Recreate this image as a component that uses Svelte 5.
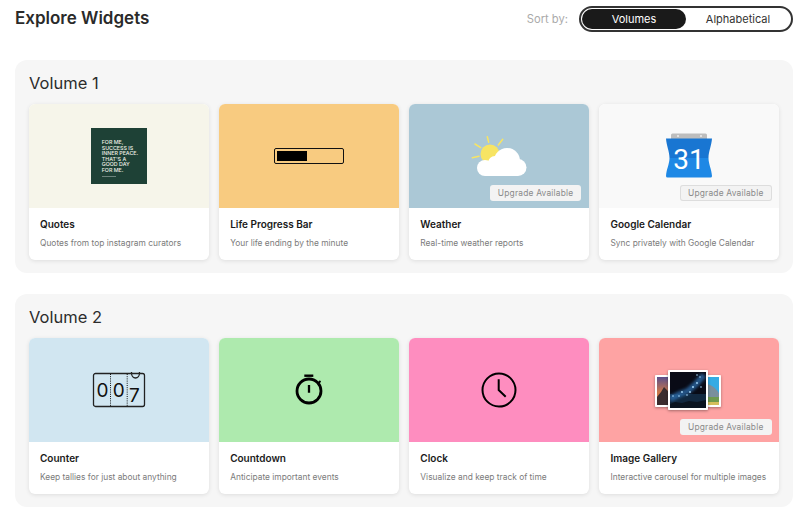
<script>
	const volumes = [
		{
			name: 'Volume 1',
			widgets: [
				{ title: 'Quotes', desc: 'Quotes from top instagram curators', bg: '#f6f5ea', icon: 'quote' },
				{ title: 'Life Progress Bar', desc: 'Your life ending by the minute', bg: '#f8cb80', icon: 'progress' },
				{ title: 'Weather', desc: 'Real-time weather reports', bg: '#abc8d6', icon: 'weather', upgrade: true },
				{ title: 'Google Calendar', desc: 'Sync privately with Google Calendar', bg: '#f9f9f9', icon: 'calendar', upgrade: true, outlined: true }
			]
		},
		{
			name: 'Volume 2',
			widgets: [
				{ title: 'Counter', desc: 'Keep tallies for just about anything', bg: '#d1e6f1', icon: 'counter' },
				{ title: 'Countdown', desc: 'Anticipate important events', bg: '#aeeaae', icon: 'countdown' },
				{ title: 'Clock', desc: 'Visualize and keep track of time', bg: '#fe8dbf', icon: 'clock' },
				{ title: 'Image Gallery', desc: 'Interactive carousel for multiple images', bg: '#fea3a3', icon: 'gallery', upgrade: true }
			]
		}
	];

	let sort = 'volumes';
</script>

<div class="page">
	<header class="top">
		<h1>Explore Widgets</h1>
		<div class="sort">
			<span class="sort-label">Sort by:</span>
			<div class="toggle">
				<button class:active={sort === 'volumes'} onclick={() => (sort = 'volumes')}>Volumes</button>
				<button class:active={sort === 'alpha'} onclick={() => (sort = 'alpha')}>Alphabetical</button>
			</div>
		</div>
	</header>

	{#each volumes as vol}
		<section class="volume">
			<h2>{vol.name}</h2>
			<div class="grid">
				{#each vol.widgets as w}
					<article class="card">
						<div class="thumb" style="background: {w.bg}">
							{#if w.icon === 'quote'}
								<div class="quote">
									<p>FOR ME,</p>
									<p>SUCCESS IS</p>
									<p>INNER PEACE.</p>
									<p>THAT'S A</p>
									<p>GOOD DAY</p>
									<p>FOR ME.</p>
									<div class="quote-by"></div>
								</div>
							{:else if w.icon === 'progress'}
								<div class="progress"><div class="progress-fill"></div></div>
							{:else if w.icon === 'weather'}
								<svg class="icon" width="56" height="42" viewBox="0 0 56 42">
									<g stroke="#f7e463" stroke-width="1.500" stroke-linecap="round">
										<line x1="16.300" y1="1.700" x2="17.700" y2="7.300" />
										<line x1="31.700" y1="4.300" x2="27.300" y2="10" />
										<line x1="4" y1="9" x2="9.700" y2="12.700" />
										<line x1="1.300" y1="22.700" x2="8" y2="21.300" />
									</g>
									<circle cx="19" cy="19" r="9.500" fill="#f7e463" />
									<g fill="#fff">
										<circle cx="14" cy="33" r="8" />
										<circle cx="24" cy="28" r="7" />
										<circle cx="36" cy="26" r="13" />
										<circle cx="47" cy="32.500" r="8.500" />
										<rect x="14" y="30" width="33" height="11" />
									</g>
								</svg>
							{:else if w.icon === 'calendar'}
								<svg class="icon calendar" width="48" height="46" viewBox="0 0 48 46">
									<path d="M6 2.500a1.500 1.500 0 0 1 1.500-1.500h33a1.500 1.500 0 0 1 1.500 1.500V8H6z" fill="#bdbdbd" />
									<circle cx="13" cy="3.500" r="1" fill="#eee" />
									<circle cx="36" cy="3.500" r="1" fill="#eee" />
									<path d="M1 6h46c-.4 7-3.500 13-3.500 19.500H4.500C4.500 19 1.400 13 1 6z" fill="#1976d2" />
									<path d="M4.500 25.500h39c0 6 3 11 3.500 18a1.500 1.500 0 0 1-1.500 1.500H2.500A1.500 1.500 0 0 1 1 43.500c.5-7 3.500-12 3.500-18z" fill="#1e88e5" />
									<text x="24" y="36" text-anchor="middle" class="cal-num">31</text>
								</svg>
							{:else if w.icon === 'counter'}
								<svg class="icon" width="54" height="36" viewBox="0 0 54 36">
									<rect x="1.500" y="1.500" width="51" height="33" rx="2" fill="none" stroke="#222" stroke-width="1.300" />
									<line x1="18.500" y1="2" x2="18.500" y2="34" stroke="#111" stroke-width="1" stroke-dasharray="1 1.200" />
									<line x1="35.200" y1="2" x2="35.200" y2="34" stroke="#111" stroke-width="1" stroke-dasharray="1 1.200" />
									<ellipse cx="43.500" cy="1" rx="4" ry="5" fill="none" stroke="#222" stroke-width="1.300" />
									<text x="10.500" y="25" text-anchor="middle" class="count-num">0</text>
									<text x="26.800" y="25" text-anchor="middle" class="count-num">0</text>
									<text x="42.500" y="30" text-anchor="middle" class="count-num">7</text>
								</svg>
							{:else if w.icon === 'countdown'}
								<svg class="icon" width="30" height="32" viewBox="0 0 30 32">
									<rect x="10.300" y="0.500" width="9" height="2.400" fill="#000" />
									<circle cx="15" cy="17" r="12" fill="none" stroke="#000" stroke-width="2.800" />
									<line x1="15" y1="11" x2="15" y2="18.700" stroke="#000" stroke-width="2.300" />
									<line x1="24" y1="9.500" x2="26.500" y2="7" stroke="#000" stroke-width="1.800" />
								</svg>
							{:else if w.icon === 'clock'}
								<svg class="icon" width="36" height="36" viewBox="0 0 36 36">
									<circle cx="18" cy="18" r="16.500" fill="none" stroke="#000" stroke-width="2" />
									<path d="M17.700 7.300V18l7 6.700" fill="none" stroke="#000" stroke-width="2" />
								</svg>
							{:else if w.icon === 'gallery'}
								<div class="gallery">
									<div class="photo left">
										<svg width="16" height="30" viewBox="0 0 16 30">
											<defs>
												<linearGradient id="dusk" x1="0" y1="0" x2="0" y2="1">
													<stop offset="0" stop-color="#5b4f8c" />
													<stop offset="0.5" stop-color="#c9764a" />
												</linearGradient>
											</defs>
											<rect width="16" height="30" fill="url(#dusk)" />
											<path d="M0 20l4-5 3-5 3 3 6 8v9H0z" fill="#3a2c2e" />
										</svg>
									</div>
									<div class="photo right">
										<svg width="16" height="30" viewBox="0 0 16 30">
											<rect width="16" height="30" fill="#35abe4" />
											<path d="M0 7c6 0 12 4 16 13v3H0z" fill="#7a8f9c" />
											<rect y="20" width="16" height="6" fill="#6f9a4e" />
											<rect y="25" width="16" height="5" fill="#d4bf5c" />
										</svg>
									</div>
									<div class="photo main">
										<svg width="36" height="36" viewBox="0 0 36 36">
											<defs>
												<filter id="glow"><feGaussianBlur stdDeviation="1.500" /></filter>
											</defs>
											<rect width="36" height="36" fill="#090b16" />
											<rect y="22" width="36" height="14" fill="#12283f" />
											<path d="M0 27l10-5 8-3 8-7 8-9" fill="none" stroke="#2f6fb0" stroke-width="6" filter="url(#glow)" opacity=".75" />
											<g fill="#a8d8fa">
												<circle cx="3" cy="24" r=".8" /><circle cx="9" cy="24" r=".8" /><circle cx="12" cy="20" r=".9" />
												<circle cx="17" cy="23" r=".8" /><circle cx="20" cy="20" r=".9" /><circle cx="23" cy="15" r="1" />
												<circle cx="27" cy="11" r=".9" /><circle cx="30" cy="5" r=".8" /><circle cx="27" cy="3" r=".8" /><circle cx="31" cy="15" r=".8" />
											</g>
											<path d="M0 32l5-2 7 1 7-2 8 1 9-2v8H0z" fill="#0a1420" />
										</svg>
									</div>
								</div>
							{/if}
							{#if w.upgrade}
								<span class="badge" class:outlined={w.outlined}>Upgrade Available</span>
							{/if}
						</div>
						<div class="body">
							<h3>{w.title}</h3>
							<p>{w.desc}</p>
						</div>
					</article>
				{/each}
			</div>
		</section>
	{/each}
</div>

<style>
	:global(body) {
		margin: 0;
		background: #fff;
		font-family: Inter, 'Liberation Sans', sans-serif;
	}

	.page {
		padding: 6px 7px 4px 15px;
		height: 501px;
		overflow: hidden;
	}

	.top {
		display: flex;
		align-items: center;
		justify-content: space-between;
		height: 26px;
		margin-bottom: 28px;
	}

	h1 {
		margin: 0;
		font-size: 17px;
		font-weight: 600;
		color: #2a2a2a;
		position: relative;
		top: -1px;
	}

	.sort {
		display: flex;
		align-items: center;
		gap: 11px;
	}

	.sort-label {
		font-size: 11.200px;
		color: #aaa;
	}

	.toggle {
		display: flex;
		box-sizing: border-box;
		width: 214px;
		height: 26px;
		padding: 1px;
		border: 2px solid #333;
		border-radius: 13px;
		background: #fff;
	}

	.toggle button {
		flex: 1;
		padding: 0;
		border: none;
		border-radius: 10px;
		background: none;
		color: #333;
		font: 400 11px Inter, sans-serif;
		cursor: pointer;
	}

	.toggle button.active {
		background: #1a1a1a;
		color: #fff;
	}

	.volume {
		box-sizing: border-box;
		height: 213px;
		margin-bottom: 21px;
		padding: 13px 14px 0;
		background: #f6f6f6;
		border-radius: 12px;
	}

	h2 {
		margin: 0 0 10px;
		font-size: 16.500px;
		line-height: 21px;
		font-weight: 400;
		color: #2c2c2c;
	}

	.grid {
		display: grid;
		grid-template-columns: repeat(4, 1fr);
		gap: 10.670px;
	}

	.card {
		height: 156px;
		background: #fff;
		border-radius: 6px;
		overflow: hidden;
		box-shadow: 0 1px 4px rgba(0, 0, 0, 0.1);
	}

	.thumb {
		position: relative;
		display: flex;
		align-items: center;
		justify-content: center;
		height: 104px;
	}

	.icon {
		display: block;
	}

	.calendar {
		transform: translateY(-0.5px);
	}

	.cal-num {
		font: 400 28px Roboto, sans-serif;
		fill: #fff;
	}

	.count-num {
		font: 400 19px Inter, sans-serif;
		fill: #111;
	}

	.quote {
		box-sizing: border-box;
		width: 56px;
		height: 56px;
		padding: 12px 0 0 11px;
		background: #1e4136;
	}

	.quote p {
		margin: 0;
		height: 5.600px;
		font-size: 5.300px;
		line-height: 5.600px;
		font-weight: 500;
		color: #eef0e6;
		white-space: nowrap;
		overflow: visible;
	}

	.quote-by {
		width: 14px;
		height: 1px;
		margin-top: 2px;
		background: rgba(255, 255, 255, 0.35);
	}

	.progress {
		box-sizing: border-box;
		width: 70px;
		height: 16px;
		padding: 2px;
		border: 1.300px solid #111;
		border-radius: 2px;
	}

	.progress-fill {
		width: 30px;
		height: 100%;
		background: #000;
	}

	.gallery {
		position: relative;
		width: 66px;
		height: 40px;
		transform: translateX(-1px);
	}

	.photo {
		position: absolute;
		box-sizing: border-box;
		border: 2px solid #fff;
		border-radius: 1px;
		overflow: hidden;
		box-shadow: 0 1px 3px rgba(0, 0, 0, 0.35);
	}

	.photo svg {
		display: block;
	}

	.photo.left {
		left: 0;
		top: 5px;
		width: 18px;
		height: 32px;
	}

	.photo.right {
		right: 0;
		top: 5px;
		width: 18px;
		height: 32px;
	}

	.photo.main {
		left: 13px;
		top: 0;
		width: 40px;
		height: 40px;
	}

	.badge {
		position: absolute;
		right: 7.500px;
		bottom: 7px;
		padding: 0 8px;
		height: 16px;
		line-height: 16px;
		font-size: 8.400px;
		letter-spacing: 0.200px;
		color: #8a8a8a;
		background: #f3f3f3;
		border-radius: 3px;
	}

	.badge.outlined {
		box-shadow: inset 0 0 0 1px #ddd;
	}

	.body {
		padding: 10px 11px 0;
	}

	h3 {
		margin: 0;
		font-size: 10px;
		line-height: 12px;
		font-weight: 600;
		color: #1a1a1a;
	}

	.body p {
		margin: 7px 0 0;
		font-size: 8.400px;
		line-height: 12px;
		color: #7b7b7b;
		white-space: nowrap;
	}
</style>
